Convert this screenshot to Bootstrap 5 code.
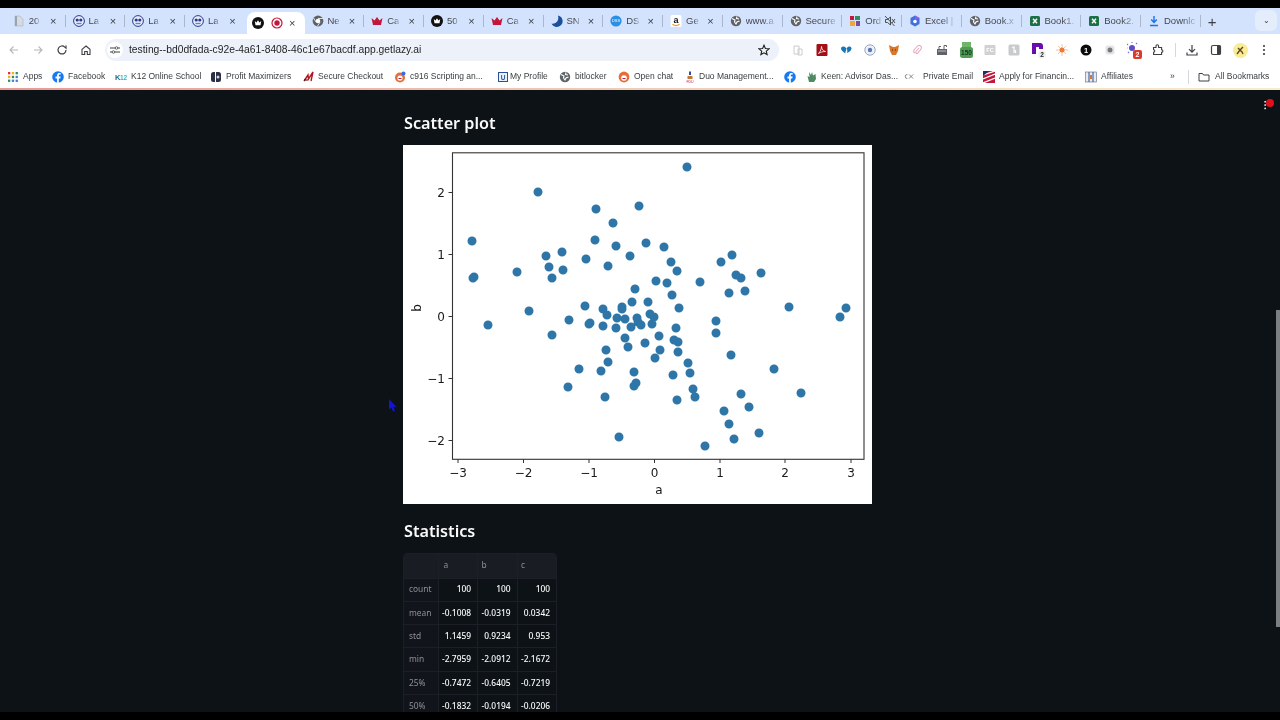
<!DOCTYPE html>
<html lang="en">
<head>
<meta charset="utf-8">
<title>Scatter plot</title>
<link href="https://cdn.jsdelivr.net/npm/bootstrap@5.3.0/dist/css/bootstrap.min.css" rel="stylesheet">
<script src="https://cdn.jsdelivr.net/npm/bootstrap@5.3.0/dist/js/bootstrap.bundle.min.js"></script>
<style>
html,body{height:720px;overflow:hidden;background:#000;margin:0}
body{font-family:"Liberation Sans",Arial,sans-serif;color:#3c4043}
.shell{height:720px;padding:8px 0;filter:blur(.4px)}
.ic{width:12px;height:12px;flex:none}
/* tab strip */
.tabs{height:26px;background:#d3e3fd;padding-left:5.75px;display:grid;grid-template-columns:repeat(20,59.75px) 1fr;align-items:center;position:relative}
.tab{height:26px;display:flex;align-items:center;padding-left:7px;font-size:9.5px;color:#44474c;position:relative}
.tab::after{content:"";position:absolute;right:0;top:7px;height:12px;width:1px;background:#a9b6cb}
.tab .t{margin-left:4px;white-space:nowrap;-webkit-mask-image:linear-gradient(90deg,#000 60%,rgba(0,0,0,.25));mask-image:linear-gradient(90deg,#000 60%,rgba(0,0,0,.25))}
.tab .x{margin-left:auto;margin-right:9px;font-size:11px;line-height:1;color:#3c4043}
.tab .mute{margin-left:auto;margin-right:6px}
.tab.on{background:#fff;border-radius:8px 8px 0 0;margin-top:4px;height:22px;margin-left:2px;padding-left:5px}
.tab.on::after,.tab.nosep::after{display:none}
.tab .ic2{margin-left:7px}
.plus{font-size:15px;line-height:1;color:#3c4043;padding-left:7px}
.chev{position:absolute;right:3px;top:2px;width:22px;height:21px;background:#e4edfc;border-radius:6px;font-size:8px;text-align:center;line-height:21px}
/* toolbar */
.tool{height:30px;background:#fff;display:grid;grid-template-columns:repeat(4,24px) 678px 1fr;align-items:center;padding:2px 0 0 2px}
.tool .nav-i{display:flex;justify-content:center}
.addr{height:22px;margin-left:7px;width:674px;border-radius:11px;background:#edf2fa;display:flex;align-items:center;padding:0 9px 0 2px;font-size:10.3px;color:#1f1f1f}
.addr .site{width:16px;height:16px;border-radius:50%;background:#fff;margin-right:6px;display:flex;align-items:center;justify-content:center;flex:none}
.exts{display:grid;grid-template-columns:repeat(16,24px) 10px repeat(4,24px);justify-items:center;align-items:center;margin-left:10px}
.vsep{width:1px;height:14px;background:#d5d8dc}
/* bookmarks */
.bms{height:24px;background:#fff;display:grid;grid-template-columns:45px 63px 95px 93px 91px 103px 62px 59px 66px 100px 22px 96px 81px 102px 80px 1fr;padding-left:7px;padding-top:1px;align-items:center;font-size:8.5px;color:#3c4043}
.bm{display:flex;align-items:center;gap:4px;white-space:nowrap}
.bm.tight{gap:1px}
.bm.far{gap:3px}
.bm .cx{margin-left:2px;margin-right:6px}
.more{width:18px;margin-left:5px}
.folder{margin:0 5px 0 9px}
.rule{height:2px;background:linear-gradient(90deg,#e79a94,#f0c9b5 45%,#f6eccb)}
/* page */
.page{height:622px;background:#0d1216;overflow:hidden;position:relative}
.col-main{width:470px;margin-left:403px;padding-top:22px;color:#fafafa}
.h{font-family:"Noto Sans",sans-serif;font-weight:600;font-size:16.200px;line-height:22px;margin:0 0 11px;padding-left:1px}
.h.second{margin-top:16px}
.plot{display:block;width:469px;height:359px}
.plot text{font-family:"DejaVu Sans",sans-serif;font-size:12px;fill:#1a1a1a}
.df{width:154px;border:1px solid #1c1f26;border-radius:4px 4px 0 0;overflow:hidden}
.df table{--bs-table-bg:transparent;--bs-table-color:#fafafa;--bs-table-border-color:#1c1f26;table-layout:fixed;width:100%;margin:0;font-family:"Noto Sans",sans-serif;font-size:8.4px}
.df th,.df td{height:23.3px;padding:0 5px;vertical-align:middle;font-weight:500;border-width:0 1px 1px 0;border-style:solid;border-color:#1c1f26;white-space:nowrap}
.df thead th{background:#191c23;color:#8e9096;text-align:left;height:24px;font-weight:400}
.df thead th:nth-child(3){padding-left:4px}
.df thead th:nth-child(4){padding-left:3px}
.df tbody th{color:#8e9096;background:#11151b;font-weight:400}
.df td{text-align:right;padding:0 5.500px 0 0}
.df td:nth-child(3){padding-right:6.500px}
.df td:nth-child(4){padding-right:7.500px}
.c0{width:34px}.c1{width:39px}.c2,.c3{width:40.5px}
.sbar{position:absolute;right:0;top:220px;width:4px;height:317px;background:#7b7f82}
.run{position:absolute;left:1262px;top:8px;width:12px;height:14px}
.cursor{position:absolute;left:388px;top:309px;width:10px;height:13px}
</style>
</head>
<body>
<svg class="d-none" xmlns="http://www.w3.org/2000/svg">
<symbol id="globe" viewBox="0 0 12 12"><circle cx="6" cy="6" r="5.2" fill="#5f6368"/><path d="M2 3.5 5 5l-.5 2L6 9l1-2 2.500-1M7 1.500 6.500 3.500 9 4" stroke="#fff" stroke-width="1.100" fill="none"/></symbol>
<symbol id="lazy" viewBox="0 0 12 12"><circle cx="6" cy="6" r="5.400" fill="#e8ecf8" stroke="#2b3a8f"/><circle cx="4.200" cy="5" r="1.600" fill="#2b3a8f"/><circle cx="7.800" cy="5" r="1.600" fill="#2b3a8f"/><path d="M3.500 8.500h5" stroke="#4f8ad8" stroke-width="1.300"/></symbol>
<symbol id="bcrown" viewBox="0 0 12 12"><circle cx="6" cy="6" r="6" fill="#111"/><path d="M2.800 4 4.500 5.500 6 3.300 7.500 5.500 9.200 4 8.500 8.300h-5z" fill="#fff"/></symbol>
<symbol id="rcrown" viewBox="0 0 12 12"><path d="M.5 3 3.500 5.500 6 2 8.500 5.500 11.500 3 10 10H2z" fill="#c3163a"/></symbol>
<symbol id="xl" viewBox="0 0 12 12"><rect x="1" y="1" width="10" height="10" rx="1.500" fill="#1d7044"/><path d="M4 3.700 8 8.300M8 3.700 4 8.300" stroke="#fff" stroke-width="1.400"/></symbol>
<symbol id="fb" viewBox="0 0 12 12"><circle cx="6" cy="6" r="5.800" fill="#1877f2"/><path d="M6.800 12V7.400h1.500l.3-1.800H6.800V4.500c0-.6.300-1 1-1h.9V2c-1.800-.3-3.600 0-3.600 2.300v1.300H3.500v1.800h1.600V12z" fill="#fff"/></symbol>
</svg>

<div class="shell">
  <div class="tabs">
    <div class="tab"><svg class="ic" viewBox="0 0 12 12"><path d="M2 1h5l3 3v7H2z" fill="#d6dbe2" stroke="#aab2bc" stroke-width=".6"/><path d="M2 1h2v10H2z" fill="#9aa4b0"/></svg><span class="t">20</span><span class="x">×</span></div>
    <div class="tab"><svg class="ic"><use href="#lazy"/></svg><span class="t">La</span><span class="x">×</span></div>
    <div class="tab"><svg class="ic"><use href="#lazy"/></svg><span class="t">La</span><span class="x">×</span></div>
    <div class="tab nosep"><svg class="ic"><use href="#lazy"/></svg><span class="t">La</span><span class="x">×</span></div>
    <div class="tab on"><svg class="ic"><use href="#bcrown"/></svg><svg class="ic ic2" viewBox="0 0 12 12"><circle cx="6" cy="6" r="5" fill="none" stroke="#c3163a" stroke-width="1.200"/><circle cx="6" cy="6" r="2.700" fill="#c3163a"/></svg><span class="x">×</span></div>
    <div class="tab"><svg class="ic" viewBox="0 0 12 12"><circle cx="6" cy="6" r="5.400" fill="#5f6368"/><circle cx="6" cy="6" r="2.300" fill="#fff"/><path d="M6 3.500h5M4 7 1.500 3M8 7.200 5.500 11" stroke="#fff" stroke-width=".8"/></svg><span class="t">Ne</span><span class="x">×</span></div>
    <div class="tab"><svg class="ic"><use href="#rcrown"/></svg><span class="t">Ca</span><span class="x">×</span></div>
    <div class="tab"><svg class="ic"><use href="#bcrown"/></svg><span class="t">50</span><span class="x">×</span></div>
    <div class="tab"><svg class="ic"><use href="#rcrown"/></svg><span class="t">Ca</span><span class="x">×</span></div>
    <div class="tab"><svg class="ic" viewBox="0 0 12 12"><path d="M7 .500A5.800 5.800 0 1 1 .500 8.500C4.500 9.500 8.500 6 7 .500z" fill="#1c4f9c"/></svg><span class="t">SN</span><span class="x">×</span></div>
    <div class="tab"><svg class="ic" viewBox="0 0 12 12"><circle cx="6" cy="6" r="5.600" fill="#2a8fe6"/><text x="6" y="7.400" font-size="4" font-family="Liberation Sans" fill="#fff" text-anchor="middle">DSS</text></svg><span class="t">DS</span><span class="x">×</span></div>
    <div class="tab"><svg class="ic" viewBox="0 0 12 12"><rect x=".5" width="11" height="12" rx="1.500" fill="#fff"/><text x="6" y="7.500" font-size="9" font-weight="700" font-family="Liberation Sans" fill="#111" text-anchor="middle">a</text><path d="M2.500 9.200c2 1.500 5 1.500 7 0" stroke="#f59a1c" fill="none" stroke-width="1.200"/></svg><span class="t">Ge</span><span class="x">×</span></div>
    <div class="tab"><svg class="ic"><use href="#globe"/></svg><span class="t">www.a</span></div>
    <div class="tab"><svg class="ic"><use href="#globe"/></svg><span class="t">Secure</span></div>
    <div class="tab"><svg class="ic" viewBox="0 0 12 12"><path d="M1 1h4v4H1z" fill="#c3163a"/><path d="M6 1h5v4H6z" fill="#2f8f5b"/><path d="M1 6h5v5H1z" fill="#f0a63a"/><path d="M7 6h4v5H7z" fill="#7a4aa8"/></svg><span class="t">Ord</span><svg class="ic mute" viewBox="0 0 12 12"><path d="M1.500 4.500h2l3-2.500v8l-3-2.500h-2zM8 4l3 4M11 4 8 8M1 1l9.500 10" stroke="#3c4043" fill="none" stroke-width=".9"/></svg></div>
    <div class="tab"><svg class="ic" viewBox="0 0 12 12"><path d="M6 .5 10.500 3v6L6 11.500 1.500 9V3z" fill="#3f6fe0"/><path d="M6 .5 10.500 3 6 5.500z" fill="#9a5ae0"/><circle cx="6" cy="6.500" r="1.800" fill="#fff"/></svg><span class="t">Excel |</span></div>
    <div class="tab"><svg class="ic"><use href="#globe"/></svg><span class="t">Book.x</span></div>
    <div class="tab"><svg class="ic"><use href="#xl"/></svg><span class="t">Book1.</span></div>
    <div class="tab"><svg class="ic"><use href="#xl"/></svg><span class="t">Book2.</span></div>
    <div class="tab"><svg class="ic" viewBox="0 0 12 12"><path d="M6 1v6M3.200 4.500 6 7.500l2.800-3M2 10.500h8" stroke="#1a73e8" fill="none" stroke-width="1.400"/></svg><span class="t">Downlc</span></div>
    <div class="plus">+</div>
    <div class="chev">⌄</div>
  </div>

  <div class="tool">
    <div class="nav-i"><svg class="ic" viewBox="0 0 12 12"><path d="M10 6H2M5.500 2.500 2 6l3.500 3.500" stroke="#b4b7bb" fill="none" stroke-width="1.100"/></svg></div>
    <div class="nav-i"><svg class="ic" viewBox="0 0 12 12"><path d="M2 6h8M6.500 2.500 10 6 6.500 9.500" stroke="#b4b7bb" fill="none" stroke-width="1.100"/></svg></div>
    <div class="nav-i"><svg class="ic" viewBox="0 0 12 12"><path d="M10 6a4 4 0 1 1-1.200-2.900L10 4.200V1.500" stroke="#3c4043" fill="none" stroke-width="1.200"/></svg></div>
    <div class="nav-i"><svg class="ic" viewBox="0 0 12 12"><path d="M2 5.300 6 2l4 3.300V10.500H7.300V7.500H4.700v3H2z" stroke="#3c4043" fill="none" stroke-width="1.100"/></svg></div>
    <div class="addr">
      <span class="site"><svg width="10" height="10" viewBox="0 0 10 10"><path d="M0 3h5M8 3h2M0 7h2M5 7h5" stroke="#3c4043"/><circle cx="6.500" cy="3" r="1.300" fill="none" stroke="#3c4043" stroke-width=".8"/><circle cx="3.500" cy="7" r="1.300" fill="none" stroke="#3c4043" stroke-width=".8"/></svg></span>
      <span>testing--bd0dfada-c92e-4a61-8408-46c1e67bacdf.app.getlazy.ai</span>
      <svg class="ic ms-auto" viewBox="0 0 12 12"><path d="M6 1.200 7.400 4.500l3.600.3-2.700 2.300.8 3.500L6 8.800 2.900 10.600l.8-3.500L1 4.800l3.600-.3z" fill="none" stroke="#1f1f1f" stroke-width="1.100"/></svg>
    </div>
    <div class="exts">
      <svg class="ic" viewBox="0 0 12 12"><path d="M2 2h5v8H2zM6 5h4v6H6z" fill="none" stroke="#c9cccf"/></svg>
      <svg class="ic" viewBox="0 0 12 12"><rect width="11" height="12" x=".5" rx="1" fill="#a30f14"/><path d="M2.500 9.500c2-2 3-5 3-7 .3 3 1.500 4.500 4 5-2.500 0-5 .5-7 2z" fill="none" stroke="#fff" stroke-width=".8"/></svg>
      <svg class="ic" viewBox="0 0 12 12"><path d="M6 4C4 1.500 1 2.500 1 4.500s2 3 4.500 5C5 7 7 7 6 4zM6.500 4.500c2-3 5-2 5 0S9 8 7 9c.5-2 .5-3-.5-4.500z" fill="#1877b8"/></svg>
      <svg class="ic" viewBox="0 0 12 12"><circle cx="6" cy="6" r="5.200" fill="#eef1f7" stroke="#9aa7c0"/><circle cx="6" cy="6" r="2.200" fill="#5878b8"/></svg>
      <svg class="ic" viewBox="0 0 12 12"><path d="M1 1 5 3h2l4-2-1 6-2 4H4L2 7z" fill="#d9782a"/><path d="M4 6h1M7 6h1" stroke="#333"/></svg>
      <svg class="ic" viewBox="0 0 12 12"><path d="M3 9a2 2 0 0 1-1-3l3-3.500a2 2 0 0 1 4 2.500L6 9a1.200 1.200 0 0 1-2-1.500L7 4" fill="none" stroke="#eba7c0" stroke-width="1.100"/></svg>
      <svg class="ic" viewBox="0 0 12 12"><path d="M1 5h10v6H1z" fill="#5f6368"/><path d="M3 5V2.500h2M8 5V1.500h2.500V3" stroke="#5f6368" fill="none"/><path d="M2 7h8" stroke="#fff" stroke-width=".6"/></svg>
      <svg width="13" height="18" viewBox="0 0 13 18"><path d="M2 1h9v7H2z" fill="#6fb56a"/><rect y="6" width="13" height="11" rx="2.500" fill="#4f9b55"/><text x="6.500" y="14" font-size="6.500" font-weight="700" font-family="Liberation Sans" fill="#12331a" text-anchor="middle">150</text></svg>
      <svg class="ic" viewBox="0 0 12 12"><rect width="11" height="10" x=".5" y="1" rx="1" fill="#cfd1d3"/><text x="6" y="8" font-size="5.500" font-weight="700" font-family="Liberation Sans" fill="#fff" text-anchor="middle">FC</text></svg>
      <svg class="ic" viewBox="0 0 12 12"><rect width="11" height="11" x=".5" y=".5" rx="1.500" fill="#c8cacc"/><path d="M4 3.500 6 3v6M7.500 6v3" stroke="#fff" stroke-width="1.200" fill="none"/></svg>
      <svg width="15" height="17" viewBox="0 0 15 17"><path d="M1 1h8c2 0 3 1 3 3v3H8V5H5v7H1z" fill="#6a0dad"/><circle cx="11" cy="12.500" r="4" fill="#f1f1f1"/><text x="11" y="15" font-size="6.500" font-weight="700" font-family="Liberation Sans" fill="#222" text-anchor="middle">2</text></svg>
      <svg class="ic" viewBox="0 0 12 12"><path d="M6 0v12M0 6h12M2 2l8 8M10 2l-8 8" stroke="#f5b48a" stroke-width=".8"/><circle cx="6" cy="6" r="2.500" fill="#ee7a35"/></svg>
      <svg class="ic" viewBox="0 0 12 12"><circle cx="6" cy="6" r="5.500" fill="#0b0b0b"/><text x="6" y="8.500" font-size="7.500" font-weight="700" font-family="Liberation Sans" fill="#fff" text-anchor="middle">1</text></svg>
      <svg class="ic" viewBox="0 0 12 12"><rect x="1.500" y="1.500" width="9" height="9" rx="2" fill="#e3e4e6"/><circle cx="6" cy="6" r="2.500" fill="#77797c"/></svg>
      <svg width="15" height="17" viewBox="0 0 15 17"><circle cx="5" cy="6" r="3" fill="#5b4fc9"/><path d="M5 1v-1M1 3 0 2M.5 6H0M9 2l1-1M2 10l-1 1" stroke="#7a6fd8" stroke-width="1.200"/><rect x="6" y="8" width="9" height="9" rx="2" fill="#d93a2b"/><text x="10.500" y="15" font-size="7" font-weight="700" font-family="Liberation Sans" fill="#fff" text-anchor="middle">2</text></svg>
      <svg class="ic" viewBox="0 0 12 12"><path d="M1.500 3.500h2.500V2a1.300 1.300 0 0 1 2.600 0v1.500h3v2.200a1.300 1.300 0 0 1 0 2.600V10.500h-8V8.200a1.200 1.200 0 0 0 0-2.400z" fill="none" stroke="#3c4043" stroke-width="1.100"/></svg>
      <span class="vsep"></span>
      <svg class="ic" viewBox="0 0 12 12"><path d="M6 1v7M3 5.200 6 8.200l3-3M1 8.500v2.500h10V8.500" stroke="#3c4043" fill="none" stroke-width="1.200"/></svg>
      <svg class="ic" viewBox="0 0 12 12"><rect x="1.500" y="1.500" width="9" height="9" rx="1.500" fill="none" stroke="#3c4043" stroke-width="1.200"/><path d="M7 1.500h3.500v9H7z" fill="#3c4043"/></svg>
      <svg width="15" height="15" viewBox="0 0 15 15"><circle cx="7.500" cy="7.500" r="7.500" fill="#f8ec95"/><path d="M4 11 7 7l3-3M5 5l4 4 1 2" stroke="#5c4320" fill="none" stroke-width="1.300"/></svg>
      <svg class="ic" viewBox="0 0 12 12"><circle cx="6" cy="2" r="1.100" fill="#3c4043"/><circle cx="6" cy="6" r="1.100" fill="#3c4043"/><circle cx="6" cy="10" r="1.100" fill="#3c4043"/></svg>
    </div>
  </div>

  <div class="bms">
    <div class="bm"><svg class="ic" viewBox="0 0 12 12"><g fill="#d93a2b"><rect x="1" y="1" width="2.300" height="2.300"/></g><g fill="#f2b01e"><rect x="4.800" y="1" width="2.300" height="2.300"/><rect x="1" y="4.800" width="2.300" height="2.300"/></g><g fill="#2f8f5b"><rect x="8.600" y="1" width="2.300" height="2.300"/><rect x="4.800" y="4.800" width="2.300" height="2.300"/><rect x="1" y="8.600" width="2.300" height="2.300"/></g><g fill="#3f7de0"><rect x="8.600" y="4.800" width="2.300" height="2.300"/><rect x="4.800" y="8.600" width="2.300" height="2.300"/><rect x="8.600" y="8.600" width="2.300" height="2.300"/></g></svg>Apps</div>
    <div class="bm"><svg class="ic"><use href="#fb"/></svg>Facebook</div>
    <div class="bm"><svg class="ic" viewBox="0 0 12 12"><text x="0" y="9" font-size="7.500" font-weight="700" font-family="Liberation Sans" fill="#1f6d8f">K</text><text x="5" y="9" font-size="6.500" font-weight="700" font-family="Liberation Sans" fill="#38b4c8">12</text></svg>K12 Online School</div>
    <div class="bm"><svg class="ic" viewBox="0 0 12 12"><rect x="1" y="1" width="10" height="10" rx="2.500" fill="#2a2f45"/><path d="M5.500 1v10" stroke="#fff"/><circle cx="8" cy="6" r="1.500" fill="#cfd5e6"/></svg>Profit Maximizers</div>
    <div class="bm far"><svg class="ic" viewBox="0 0 12 12"><path d="M1 10 5 4 5.500 8 10 1 8 10" fill="none" stroke="#b3141d" stroke-width="1.400"/><path d="M1 9h4" stroke="#111"/></svg>Secure Checkout</div>
    <div class="bm"><svg class="ic" viewBox="0 0 12 12"><circle cx="6" cy="6.500" r="5" fill="#e2703a"/><circle cx="6" cy="7" r="2.600" fill="#fff"/><circle cx="9.500" cy="2.500" r="2" fill="#3b6fd8"/><path d="M4.500 7.500h3" stroke="#c3163a"/></svg>c916 Scripting an...</div>
    <div class="bm tight"><svg class="ic" viewBox="0 0 12 12"><rect x="1.500" y="1.500" width="9" height="9" fill="#e8eefa" stroke="#2b4f98"/><text x="6" y="8.500" font-size="6.500" font-weight="700" font-family="Liberation Sans" fill="#2b4f98" text-anchor="middle">U</text></svg>My Profile</div>
    <div class="bm"><svg class="ic"><use href="#globe"/></svg>bitlocker</div>
    <div class="bm"><svg class="ic" viewBox="0 0 12 12"><circle cx="6" cy="6" r="5.400" fill="#e2703a"/><circle cx="6" cy="7" r="2.800" fill="#fff"/><path d="M4.500 7.500h3" stroke="#c3163a"/></svg>Open chat</div>
    <div class="bm far"><svg class="ic" viewBox="0 0 12 12"><path d="M5 .500h2V4H5z" fill="#2b4f98"/><path d="M3.500 5h5v3h-5z" fill="#c3763a"/><text x="6" y="11.500" font-size="3.500" font-family="Liberation Sans" fill="#c3163a" text-anchor="middle">FDU</text></svg>Duo Management...</div>
    <div class="bm"><svg class="ic"><use href="#fb"/></svg></div>
    <div class="bm far"><svg class="ic" viewBox="0 0 12 12"><path d="M3 11 1.500 5l2 1L3 1l2 3 1-3 1 3.500L9.500 3 10 8l-2 3z" fill="#4f8a62"/></svg>Keen: Advisor Das...</div>
    <div class="bm far"><svg class="cx" width="10" height="7" viewBox="0 0 12 8"><path d="M4 1.500a2.500 2.500 0 1 0 0 5M6 1.500l5 5M11 1.500l-5 5" stroke="#5f6368" fill="none" stroke-width=".9"/></svg><span>Private Email</span></div>
    <div class="bm"><svg class="ic" viewBox="0 0 12 12"><rect width="12" height="12" fill="#c3163a"/><path d="M0 4 12 0M0 8 12 3M0 12 12 7" stroke="#fff" stroke-width="1.200"/><path d="M0 0h6L0 5z" fill="#1c2f6b"/></svg>Apply for Financin...</div>
    <div class="bm"><svg class="ic" viewBox="0 0 12 12"><rect x=".5" y="1" width="11" height="10" fill="#e7ecf3" stroke="#5a6a80" stroke-width=".6"/><path d="M4 1v10M8 1v10" stroke="#2b4f98"/><path d="M5 4h2v4H5z" fill="#d9782a"/></svg>Affiliates</div>
    <div class="d-flex align-items-center"><span class="more">»</span><span class="vsep"></span><svg class="ic folder" viewBox="0 0 12 12"><path d="M1 2.500h3.500l1 1.500H11v6H1z" fill="none" stroke="#3c4043"/></svg><span class="text-nowrap">All Bookmarks</span></div>
  </div>
  <div class="rule"></div>

  <div class="page">
    <div class="col-main">
      <h2 class="h">Scatter plot</h2>
      <svg class="plot" viewBox="403 145 469 359" role="img" aria-label="Scatter plot of a against b">
        <rect x="403" y="145" width="469" height="359" fill="#fff"/>
        <path fill="none" stroke="#2e75a8" stroke-width="9" stroke-linecap="round" d="M538 192h.01M472 241h.01M473 278h.01M474 277h.01M517 272h.01M546 256h.01M562 252h.01M549 267h.01M563 270h.01M552 278h.01M586 259h.01M595 240h.01M596 209h.01M613 223h.01M616 246h.01M608 266h.01M630 256h.01M639 206h.01M529 311h.01M687 167h.01M646 243h.01M664 247h.01M671 262h.01M677 271h.01M656 281h.01M667 283h.01M672 295h.01M679 308h.01M700 282h.01M721 262h.01M732 255h.01M736 275h.01M741 278h.01M761 273h.01M729 293h.01M745 291h.01M789 307h.01M846 308h.01M840 317h.01M716 321h.01M716 333h.01M635 289h.01M632 302h.01M648 302h.01M622 307h.01M622 309h.01M603 309h.01M607 315h.01M585 306h.01M590 323h.01M603 326h.01M616 328h.01M617 318h.01M625 319h.01M631 327h.01M637 318h.01M638 322h.01M641 325h.01M650 314h.01M654 317h.01M652 324h.01M676 328h.01M659 336h.01M674 340h.01M678 342h.01M625 338h.01M645 343h.01M628 347h.01M660 350h.01M678 352h.01M606 350h.01M655 358h.01M608 362h.01M688 363h.01M690 373h.01M673 375h.01M731 355h.01M774 369h.01M693 389h.01M695 397h.01M677 400h.01M741 394h.01M801 393h.01M749 407h.01M724 411h.01M729 424h.01M759 433h.01M734 439h.01M705 446h.01M488 325h.01M569 320h.01M552 335h.01M589 324h.01M579 369h.01M601 371h.01M634 372h.01M636 383h.01M634 386h.01M568 387h.01M605 397h.01M619 437h.01"/>
        <rect x="452.500" y="152.800" width="411.500" height="306.500" fill="none" stroke="#333" stroke-width="1.100"/>
        <path stroke="#333" fill="none" d="M458 459v4M523.500 459v4M589 459v4M654.500 459v4M720 459v4M785 459v4M851 459v4M448.500 192.500h4M448.500 254.500h4M448.500 316.500h4M448.500 378.500h4M448.500 440.500h4"/>
        <g text-anchor="middle">
          <text x="458" y="477">−3</text><text x="523.500" y="477">−2</text><text x="589" y="477">−1</text><text x="654.500" y="477">0</text><text x="720" y="477">1</text><text x="785" y="477">2</text><text x="851" y="477">3</text>
          <text x="659" y="494">a</text>
          <text transform="translate(421 308) rotate(-90)">b</text>
        </g>
        <g text-anchor="end">
          <text x="445" y="197">2</text><text x="445" y="259">1</text><text x="445" y="321">0</text><text x="445" y="383">−1</text><text x="445" y="445">−2</text>
        </g>
      </svg>
      <h2 class="h second">Statistics</h2>
      <div class="df">
        <table class="table">
          <colgroup><col class="c0"><col class="c1"><col class="c2"><col class="c3"></colgroup>
          <thead><tr><th></th><th>a</th><th>b</th><th>c</th></tr></thead>
          <tbody>
            <tr><th>count</th><td>100</td><td>100</td><td>100</td></tr>
            <tr><th>mean</th><td>-0.1008</td><td>-0.0319</td><td>0.0342</td></tr>
            <tr><th>std</th><td>1.1459</td><td>0.9234</td><td>0.953</td></tr>
            <tr><th>min</th><td>-2.7959</td><td>-2.0912</td><td>-2.1672</td></tr>
            <tr><th>25%</th><td>-0.7472</td><td>-0.6405</td><td>-0.7219</td></tr>
            <tr><th>50%</th><td>-0.1832</td><td>-0.0194</td><td>-0.0206</td></tr>
          </tbody>
        </table>
      </div>
    </div>
    <div class="sbar"></div>
    <svg class="run" viewBox="0 0 12 14"><circle cx="8" cy="5" r="4" fill="#e0101c"/><g fill="#fff"><rect x="2.400" y="3" width="1.500" height="1.500"/><rect x="2.400" y="6.300" width="1.500" height="1.500"/><rect x="2.400" y="9.700" width="1.500" height="1.500"/></g></svg>
    <svg class="cursor" viewBox="0 0 10 13"><path d="M1 0 8.500 8 5.500 8 7 12 5 12.500 3.500 8.500 1 10.500z" fill="#1414d8"/></svg>
  </div>
</div>
</body>
</html>
